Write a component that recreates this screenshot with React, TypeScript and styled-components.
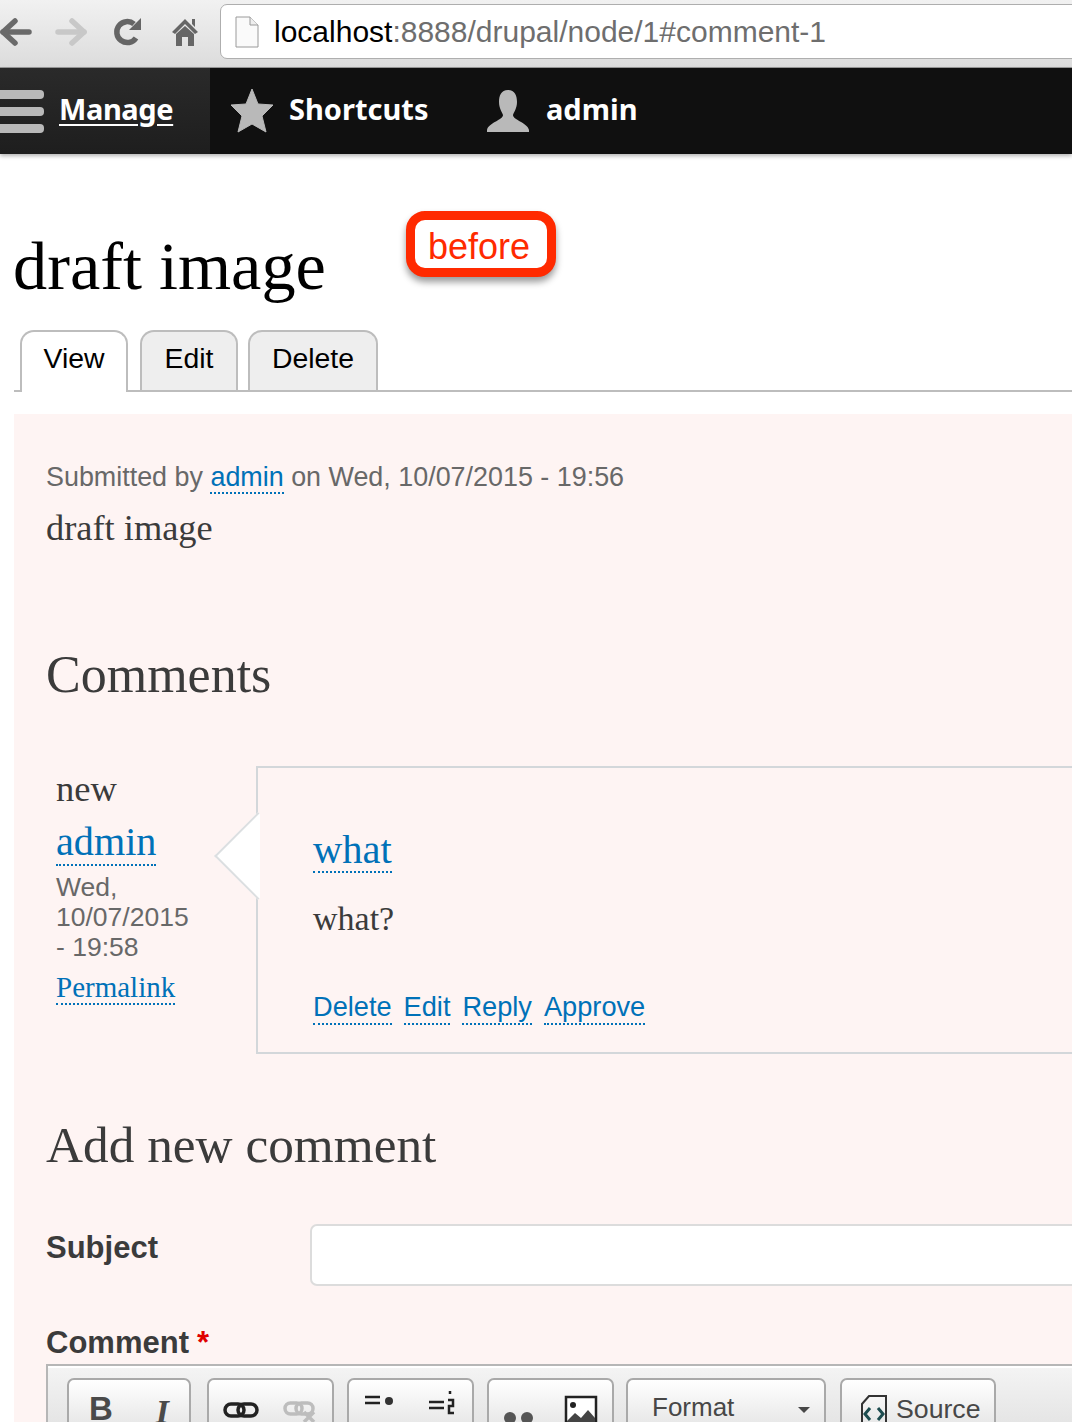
import React from 'react';
import styled, { createGlobalStyle } from 'styled-components';

const GlobalStyle = createGlobalStyle`
  html, body {
    margin: 0;
    padding: 0;
    background: #fff;
  }
  * {
    box-sizing: border-box;
  }
`;

const Page = styled.div`
  position: relative;
  width: 1072px;
  height: 1422px;
  overflow: hidden;
  font-family: 'Liberation Sans', Arial, sans-serif;
  background: #fff;
`;

const BrowserBar = styled.div`
  display: flex;
  align-items: center;
  height: 68px;
  padding: 0 0 5px 0;
  background: linear-gradient(#f1f1f1, #dcdcdc);
  border-bottom: 1px solid #9a9a9a;
`;

const NavIcons = styled.div`
  display: flex;
  align-items: center;
  width: 220px;
  flex: none;
  margin-top: 2px;
`;

const NavIcon = styled.svg<{ $w: number; $gap: number }>`
  flex: none;
  width: ${(p) => p.$w}px;
  height: 34px;
  margin-right: ${(p) => p.$gap}px;
`;

const AddressField = styled.div`
  display: flex;
  align-items: center;
  flex: 1;
  height: 55px;
  margin-right: -12px;
  padding: 2px 0 0 14px;
  background: #fff;
  border: 1px solid #aeaeae;
  border-radius: 7px;
  font-size: 30px;
  color: #6e6e6e;
`;

const Host = styled.span`
  color: #000;
  margin-left: 15px;
`;

const AdminBar = styled.div`
  display: flex;
  align-items: stretch;
  height: 86px;
  background: #101010;
  box-shadow: 0 2px 4px rgba(0, 0, 0, 0.3);
  font-family: 'Noto Sans', 'Open Sans', sans-serif;
  font-weight: 700;
  font-size: 29px;
  color: #fff;
`;

const ManageTab = styled.div`
  display: flex;
  align-items: center;
  width: 210px;
  gap: 15px;
  background: linear-gradient(#2a2a2a, #1e1e1e);
`;

const BarItem = styled.div<{ $width: number; $gap: number }>`
  display: flex;
  align-items: center;
  width: ${(p) => p.$width}px;
  gap: ${(p) => p.$gap}px;
  padding-left: 21px;
`;

const BarLabel = styled.span`
  padding-bottom: 6px;
`;

const ManageLabel = styled(BarLabel)`
  letter-spacing: -0.4px;
  text-decoration: underline;
  text-underline-offset: 4px;
`;

const BarGlyph = styled.svg`
  flex: none;
`;

const Burger = styled.div`
  display: flex;
  flex-direction: column;
  gap: 8px;
  width: 44px;
`;

const BurgerLine = styled.span`
  display: block;
  height: 9px;
  border-radius: 0 4px 4px 0;
  background: #b9b9b9;
`;

const PageHead = styled.header`
  position: relative;
  padding: 71px 0 0 14px;
`;

const Title = styled.h1`
  margin: 0 0 0 -1px;
  height: 105px;
  font-family: 'Liberation Serif', 'Times New Roman', serif;
  font-weight: 400;
  font-size: 68.3px;
  line-height: 83px;
  color: #000;
`;

const Note = styled.div`
  position: absolute;
  left: 406px;
  top: 57px;
  width: 150px;
  height: 66px;
  display: flex;
  align-items: center;
  justify-content: center;
  border: 9px solid #ff2a00;
  border-radius: 19px;
  background: #fff;
  box-shadow: 0 5px 7px rgba(0, 0, 0, 0.4);
  color: #ff2a00;
  font-size: 36px;
  padding: 6px 4px 0 0;
`;

const Tabs = styled.nav`
  display: flex;
  align-items: flex-end;
  height: 62px;
  padding-left: 6px;
  border-bottom: 2px solid #bdbdbd;
`;

const Tab = styled.div<{ $active?: boolean; $width: number; $gap: number }>`
  display: flex;
  justify-content: center;
  width: ${(p) => p.$width}px;
  height: ${(p) => (p.$active ? 62 : 60)}px;
  margin-right: ${(p) => p.$gap}px;
  margin-bottom: ${(p) => (p.$active ? -2 : 0)}px;
  padding-top: 9px;
  background: ${(p) => (p.$active ? '#fff' : '#eeeeee')};
  border: 2px solid #bdbdbd;
  border-bottom: 0;
  border-radius: 14px 14px 0 0;
  font-size: 28.4px;
  line-height: 34px;
  color: #000;
`;

const Panel = styled.main`
  margin: 22px 0 0 14px;
  padding: 46px 0 0 32px;
  height: 1010px;
  background: #fef4f3;
`;

const SansLink = styled.a`
  color: #0071b8;
  border-bottom: 2px dotted #0071b8;
`;

const Submitted = styled.div`
  height: 34px;
  font-size: 26.9px;
  line-height: 34px;
  color: #686868;
`;

const Lead = styled.p`
  margin: 15px 0 0;
  font-family: 'Liberation Serif', Georgia, serif;
  font-size: 36.4px;
  line-height: 38px;
  color: #3b3b3b;
`;

const SectionTitle = styled.h2<{ $top: number; $size: number }>`
  margin: ${(p) => p.$top}px 0 0;
  font-family: 'Liberation Serif', Georgia, serif;
  font-weight: 400;
  font-size: ${(p) => p.$size}px;
  line-height: 58px;
  color: #3b3b3b;
`;

const CommentRow = styled.section`
  display: flex;
  margin-top: 62px;
`;

const Author = styled.aside`
  width: 210px;
  flex: none;
  padding: 1px 0 0 10px;
  font-family: 'Liberation Serif', Georgia, serif;
`;

const NewMark = styled.div`
  font-size: 36.5px;
  line-height: 44px;
  color: #3b3b3b;
`;

const AuthorName = styled.a`
  display: inline-block;
  margin-top: 9px;
  font-size: 40.2px;
  line-height: 44px;
  color: #0071b8;
  border-bottom: 2px dotted #0071b8;
`;

const AuthorDate = styled.div`
  width: 140px;
  margin-top: 6px;
  font-family: 'Liberation Sans', Arial, sans-serif;
  font-size: 26.5px;
  line-height: 30px;
  color: #686868;
`;

const Permalink = styled.a`
  display: inline-block;
  margin-top: 9px;
  font-size: 29px;
  line-height: 32px;
  color: #0071b8;
  border-bottom: 2px dotted #0071b8;
`;

const CommentBox = styled.article`
  position: relative;
  flex: 1;
  height: 288px;
  padding: 61px 0 0 55px;
  border: 2px solid #d3d7da;
  border-right: none;
`;

const ArrowClip = styled.span`
  position: absolute;
  left: -44px;
  top: 44px;
  width: 46px;
  height: 88px;
  overflow: hidden;
`;

const ArrowShape = styled.span`
  position: absolute;
  left: 13px;
  top: 13px;
  width: 62px;
  height: 62px;
  background: #fff;
  border-left: 2px solid #dcdfe1;
  border-bottom: 2px solid #dcdfe1;
  transform: rotate(45deg);
`;

const CommentTitle = styled.a`
  display: inline-block;
  font-family: 'Liberation Serif', Georgia, serif;
  font-size: 40.5px;
  line-height: 42px;
  color: #0071b8;
  border-bottom: 2px dotted #0071b8;
`;

const CommentText = styled.p`
  margin: 26px 0 0;
  font-family: 'Liberation Serif', Georgia, serif;
  font-size: 34px;
  line-height: 40px;
  color: #3b3b3b;
`;

const CommentLinks = styled.div`
  display: flex;
  gap: 12px;
  margin-top: 52px;
  font-size: 27.2px;
  line-height: 32px;
`;

const Label = styled.label`
  font-family: 'Liberation Sans', Arial, sans-serif;
  font-weight: 700;
  font-size: 31px;
  line-height: 36px;
  color: #3b3b3b;
`;

const SubjectRow = styled.div`
  display: flex;
  align-items: flex-start;
  margin-top: 50px;
  margin-right: -10px;
`;

const SubjectLabel = styled(Label)`
  flex: none;
  width: 264px;
  padding-top: 6px;
`;

const SubjectInput = styled.div`
  flex: 1;
  height: 62px;
  background: #fff;
  border: 2px solid #dcdcdc;
  border-radius: 7px;
`;

const CommentLabel = styled.div`
  margin-top: 39px;
  height: 39px;
`;

const Required = styled.span`
  margin-left: 8px;
  color: #e00000;
`;

const Editor = styled.div`
  display: flex;
  height: 70px;
  padding: 12px 0 0 19px;
  border-top: 2px solid #b6b6b6;
  border-left: 2px solid #b6b6b6;
  box-shadow: inset 0 2px 0 #fff;
  background: linear-gradient(#f4f4f4, #e2e2e2);
`;

const ToolGroup = styled.div<{ $width: number; $gap: number }>`
  display: flex;
  align-items: flex-start;
  flex: none;
  width: ${(p) => p.$width}px;
  height: 70px;
  margin-right: ${(p) => p.$gap}px;
  background: linear-gradient(#ffffff, #dcdcdc);
  border: 2px solid #a9a9a9;
  border-radius: 7px;
  color: #474747;
`;

const ToolIcon = styled.svg<{ $left: number; $top: number }>`
  flex: none;
  width: 36px;
  height: 36px;
  margin: ${(p) => p.$top}px 0 0 ${(p) => p.$left}px;
`;

const FormatText = styled.span`
  flex: 1;
  margin-top: 12px;
  padding-left: 24px;
  font-size: 26px;
  line-height: 30px;
`;

const Caret = styled.span`
  width: 0;
  height: 0;
  margin: 27px 14px 0 0;
  border-left: 6px solid transparent;
  border-right: 6px solid transparent;
  border-top: 6px solid #474747;
`;

const SourceText = styled.span`
  margin: 16px 0 0 5px;
  font-size: 26.7px;
  line-height: 26px;
`;

const BoldGlyph = styled.span<{ $italic?: boolean; $left: number; $top: number }>`
  margin: ${(p) => p.$top}px 0 0 ${(p) => p.$left}px;
  font-family: ${(p) => (p.$italic ? "'Liberation Serif', serif" : "'Liberation Sans', sans-serif")};
  font-style: ${(p) => (p.$italic ? 'italic' : 'normal')};
  font-weight: 700;
  font-size: ${(p) => (p.$italic ? 34 : 33)}px;
  line-height: 24px;
  color: #4a4a4a;
`;

const BackIcon = ({ color }: { color: string }) => (
  <g fill="none" stroke={color} strokeWidth="5.5" strokeLinecap="round" strokeLinejoin="round">
    <path d="M3 17 H29" />
    <path d="M15 6 L3 17 L15 28" />
  </g>
);

const App = () => (
  <Page>
    <GlobalStyle />
    <BrowserBar>
      <NavIcons>
        <NavIcon $w={32} $gap={23} viewBox="0 0 32 34">
          <BackIcon color="#6a6a6a" />
        </NavIcon>
        <NavIcon $w={32} $gap={26} viewBox="0 0 32 34">
          <g transform="translate(32 0) scale(-1 1)">
            <BackIcon color="#c8c8c8" />
          </g>
        </NavIcon>
        <NavIcon $w={30} $gap={29} viewBox="0 0 30 34">
          <path d="M23 23 A10.5 10.5 0 1 1 21 9" fill="none" stroke="#656565" strokeWidth="5.5" />
          <path d="M28 3 V15 H16 Z" fill="#656565" />
        </NavIcon>
        <NavIcon $w={26} $gap={0} viewBox="0 0 26 34">
          <path d="M13 4 L26 17 L23 19 L13 9 L3 19 L0 17 Z M20 4 H23 V12 L20 9 Z" fill="#666" />
          <path d="M4 19 L13 11 L22 19 V31 H16 V22 H10 V31 H4 Z" fill="#666" />
        </NavIcon>
      </NavIcons>
      <AddressField>
        <svg width="24" height="32" viewBox="0 0 24 32">
          <path d="M1 1 H15 L23 9 V31 H1 Z" fill="#fafafa" stroke="#9a9a9a" />
          <path d="M15 1 V9 H23" fill="#eee" stroke="#9a9a9a" />
        </svg>
        <Host>localhost</Host>:8888/drupal/node/1#comment-1
      </AddressField>
    </BrowserBar>
    <AdminBar>
      <ManageTab>
        <Burger>
          <BurgerLine />
          <BurgerLine />
          <BurgerLine />
        </Burger>
        <ManageLabel>Manage</ManageLabel>
      </ManageTab>
      <BarItem $width={256} $gap={16}>
        <BarGlyph width="42" height="46" viewBox="0 0 42 46">
          <path
            d="M21 1 L27 16 L42 17 L31 28 L35 44 L21 36 L7 44 L11 28 L0 17 L15 16 Z"
            fill="#b9b9b9"
            stroke="#b9b9b9"
            strokeLinejoin="round"
          />
        </BarGlyph>
        <BarLabel>Shortcuts</BarLabel>
      </BarItem>
      <BarItem $width={200} $gap={17}>
        <BarGlyph width="42" height="44" viewBox="0 0 42 44">
          <path
            d="M21 1 C28 1 30 7 30 13 C30 19 27 23 26 26 C26 31 41 34 42 41 V43 H0 V41 C1 34 16 31 16 26 C15 23 12 19 12 13 C12 7 14 1 21 1 Z"
            fill="#b9b9b9"
          />
        </BarGlyph>
        <BarLabel>admin</BarLabel>
      </BarItem>
    </AdminBar>
    <PageHead>
      <Title>draft image</Title>
      <Note>before</Note>
      <Tabs>
        <Tab $active $width={108} $gap={12}>View</Tab>
        <Tab $width={98} $gap={10}>Edit</Tab>
        <Tab $width={130} $gap={0}>Delete</Tab>
      </Tabs>
    </PageHead>
    <Panel>
      <Submitted>
        Submitted by <SansLink>admin</SansLink> on Wed, 10/07/2015 - 19:56
      </Submitted>
      <Lead>draft image</Lead>
      <SectionTitle $top={99} $size={52}>Comments</SectionTitle>
      <CommentRow>
        <Author>
          <NewMark>new</NewMark>
          <AuthorName>admin</AuthorName>
          <AuthorDate>Wed, 10/07/2015 - 19:58</AuthorDate>
          <Permalink>Permalink</Permalink>
        </Author>
        <CommentBox>
          <ArrowClip>
            <ArrowShape />
          </ArrowClip>
          <CommentTitle>what</CommentTitle>
          <CommentText>what?</CommentText>
          <CommentLinks>
            <SansLink>Delete</SansLink>
            <SansLink>Edit</SansLink>
            <SansLink>Reply</SansLink>
            <SansLink>Approve</SansLink>
          </CommentLinks>
        </CommentBox>
      </CommentRow>
      <SectionTitle $top={62} $size={51.3}>Add new comment</SectionTitle>
      <SubjectRow>
        <SubjectLabel>Subject</SubjectLabel>
        <SubjectInput />
      </SubjectRow>
      <CommentLabel>
        <Label>
          Comment<Required>*</Required>
        </Label>
      </CommentLabel>
      <Editor>
        <ToolGroup $width={124} $gap={16}>
          <BoldGlyph $left={20} $top={17}>B</BoldGlyph>
          <BoldGlyph $italic $left={43} $top={20}>I</BoldGlyph>
        </ToolGroup>
        <ToolGroup $width={127} $gap={13}>
          <ToolIcon $left={14} $top={12} viewBox="0 0 36 36">
            <g fill="none" stroke="#222" strokeWidth="3.5">
              <rect x="2" y="12" width="19" height="12" rx="6" />
              <rect x="15" y="12" width="19" height="12" rx="6" />
            </g>
          </ToolIcon>
          <ToolIcon $left={24} $top={13} viewBox="0 0 36 36">
            <g fill="none" stroke="#bdbdbd" strokeWidth="3.5">
              <rect x="2" y="10" width="17" height="11" rx="5.5" />
              <rect x="13" y="10" width="17" height="11" rx="5.5" />
              <path d="M21 19 L31 29 M31 19 L21 29" />
            </g>
          </ToolIcon>
        </ToolGroup>
        <ToolGroup $width={127} $gap={13}>
          <ToolIcon $left={14} $top={8} viewBox="0 0 36 36">
            <path d="M2 9 H17 M2 15 H17" stroke="#222" strokeWidth="2.5" />
            <circle cx="26" cy="13" r="4" fill="#333" />
          </ToolIcon>
          <ToolIcon $left={28} $top={8} viewBox="0 0 36 36">
            <path d="M2 14 H17 M2 20 H17" stroke="#222" strokeWidth="2.5" />
            <path d="M23 3 V6 M21 12 H26 V18 H22 V25 H27" fill="none" stroke="#222" strokeWidth="2.5" />
          </ToolIcon>
        </ToolGroup>
        <ToolGroup $width={127} $gap={12}>
          <ToolIcon $left={12} $top={8} viewBox="0 0 36 36">
            <circle cx="9" cy="30" r="6" fill="#555" />
            <circle cx="26" cy="30" r="6" fill="#555" />
          </ToolIcon>
          <ToolIcon $left={27} $top={13} viewBox="0 0 36 36">
            <rect x="2" y="4" width="30" height="30" fill="#fff" stroke="#222" strokeWidth="2.5" />
            <circle cx="9" cy="12" r="3" fill="#222" />
            <path d="M3 28 L11 20 L17 25 L24 17 L31 25 V33 H3 Z" fill="#444" />
          </ToolIcon>
        </ToolGroup>
        <ToolGroup $width={200} $gap={14}>
          <FormatText>Format</FormatText>
          <Caret />
        </ToolGroup>
        <ToolGroup $width={156} $gap={0}>
          <ToolIcon $left={13} $top={14} viewBox="0 0 36 36">
            <path d="M14 2 H31 V34 H7 V10 Z" fill="none" stroke="#333" strokeWidth="2" />
            <path d="M15 14 L10 20 L15 26 M23 14 L28 20 L23 26" fill="none" stroke="#1d4d50" strokeWidth="3" />
          </ToolIcon>
          <SourceText>Source</SourceText>
        </ToolGroup>
      </Editor>
    </Panel>
  </Page>
);

export default App;
